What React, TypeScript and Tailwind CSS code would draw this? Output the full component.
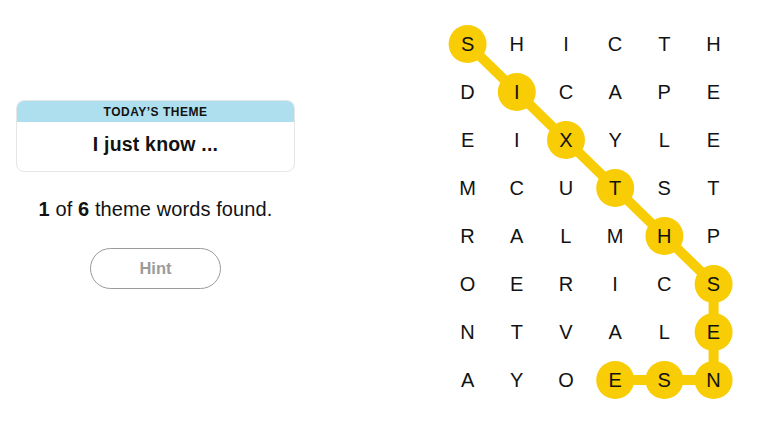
import React from "react";

const GRID = [
  "SHICTH",
  "DICAPE",
  "EIXYLE",
  "MCUTST",
  "RALMHP",
  "OERICS",
  "NTVALE",
  "AYOESN",
];

const PATH: [number, number][] = [
  [0, 0],
  [1, 1],
  [2, 2],
  [3, 3],
  [4, 4],
  [5, 5],
  [5, 6],
  [5, 7],
  [4, 7],
  [3, 7],
];

const CW = 49.2;
const RH = 48;

export default function App() {
  const pts = PATH.map(([c, r]) => `${c * CW + CW / 2},${r * RH + RH / 2}`).join(" ");
  return (
    <div
      className="w-[768px] h-[432px] bg-white flex text-[#121212]"
      style={{ fontFamily: '"Liberation Sans", Arial, sans-serif' }}
    >
      <div className="w-[311px] pl-4 pr-4 pt-[100px] flex flex-col items-center">
        <div className="w-[279px] rounded-lg border border-[#e6e6e6] overflow-hidden">
          <div className="h-[21px] bg-[#aedfee] flex items-center justify-center text-[12px] font-bold tracking-[0.5px] text-[#121212]">
            TODAY’S THEME
          </div>
          <div className="h-[49px] flex items-center justify-center text-[19.5px] font-bold pb-[3px] tracking-[0.2px]">
            I just know ...
          </div>
        </div>
        <div className="mt-[25px] text-[20px] leading-[24px] tracking-[0.1px]">
          <span className="font-bold">1</span> of <span className="font-bold">6</span> theme words found.
        </div>
        <button className="mt-[27px] w-[131px] h-[41px] rounded-full border border-[#9a9a9a] text-[#9b9b9b] text-[16.5px] font-bold flex items-center justify-center">
          Hint
        </button>
      </div>
      <div className="flex-1 pt-5 pl-[132px]">
        <div className="relative w-[295px] h-[384px]">
          <svg className="absolute inset-0" width={295.2} height={384}>
            <polyline points={pts} fill="none" stroke="#f8cd05" strokeWidth={10} strokeLinejoin="round" strokeLinecap="round" />
            {PATH.map(([c, r]) => (
              <circle key={`${c}-${r}`} cx={c * CW + CW / 2} cy={r * RH + RH / 2} r={19} fill="#f8cd05" />
            ))}
          </svg>
          <div className="relative grid grid-cols-6 grid-rows-8 w-[295px] h-[384px]">
            {GRID.map((row, r) =>
              row.split("").map((ch, c) => (
                <div key={`${r}-${c}`} className="flex items-center justify-center text-[20px] leading-none">
                  {ch}
                </div>
              ))
            )}
          </div>
        </div>
      </div>
    </div>
  );
}
